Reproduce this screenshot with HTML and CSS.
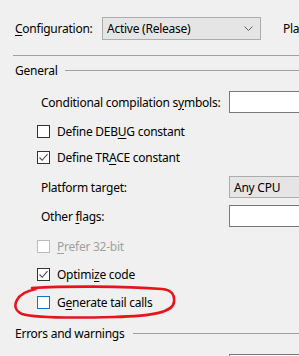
FILE: index.html
```html
<!DOCTYPE html>
<html lang="en">

<head>
    <meta charset="UTF-8">
    <title>Build properties</title>
    <link rel="stylesheet" href="styles.css">
</head>

<body>
    <div class="page">
        <div class="config-row">
            <span class="config-label"><u>C</u>onfiguration:</span>
            <div class="combo">
                <span>Active (Release)</span>
                <svg class="chevron" width="9" height="5" viewBox="0 0 9 5">
                    <path d="M0.5 0.5 L4.5 4.5 L8.5 0.5" fill="none" stroke="#606060" stroke-width="1" />
                </svg>
            </div>
            <span class="platform-label">Platform:</span>
        </div>
        <div class="rule"></div>

        <div class="section">
            <span>General</span>
            <div class="section-line"></div>
        </div>

        <div class="field field-symbols">
            <span class="field-label">Conditional compilation s<u>y</u>mbols:</span>
            <div class="textbox"></div>
        </div>

        <label class="check check-debug">
            <span class="box"></span>
            <span>Define DEB<u>U</u>G constant</span>
        </label>
        <label class="check check-trace">
            <span class="box checked">
                <svg width="11" height="11" viewBox="0 0 11 11">
                    <path d="M1.5 5.5 L4.2 8.3 L9.5 2.2" fill="none" stroke="#4a4a4a" stroke-width="1.1" />
                </svg>
            </span>
            <span>Define TR<u>A</u>CE constant</span>
        </label>

        <div class="field field-platform">
            <span class="field-label">Platform tar<u>g</u>et:</span>
            <div class="combo combo-wide">Any CPU</div>
        </div>
        <div class="field field-flags">
            <span class="field-label">Other <u>f</u>lags:</span>
            <div class="textbox"></div>
        </div>

        <label class="check check-prefer disabled">
            <span class="box"></span>
            <span><u>P</u>refer 32-bit</span>
        </label>
        <label class="check check-optimize">
            <span class="box checked">
                <svg width="11" height="11" viewBox="0 0 11 11">
                    <path d="M1.5 5.5 L4.2 8.3 L9.5 2.2" fill="none" stroke="#4a4a4a" stroke-width="1.1" />
                </svg>
            </span>
            <span>Optimi<u>z</u>e code</span>
        </label>
        <label class="check check-tail">
            <span class="box focus"></span>
            <span>G<u>e</u>nerate tail calls</span>
        </label>

        <div class="section section-errors">
            <span>Errors and warnings</span>
            <div class="section-line"></div>
        </div>
        <div class="field field-next">
            <div class="textbox"></div>
        </div>

        <!-- hand drawn annotation -->
        <svg class="marker" width="162" height="36" viewBox="0 0 162 36">
            <path d="M18 3 C50 1 110 1 148 4 C158 5 161 10 160 17 C159 27 140 31 100 32 C60 33 20 33 8 29 C1 26 0 20 3 15 C6 9 12 6 22 4"
                fill="none" stroke="#e8141c" stroke-width="2.6" stroke-linecap="round" />
        </svg>
    </div>
</body>

</html>
```

FILE: styles.css
```css
html,
body {
    margin: 0;
    padding: 0;
    background-color: #f0f0f0;
    overflow: hidden;
}

.page {
    position: relative;
    width: 299px;
    height: 356px;
    overflow: hidden;
    font-family: "Noto Sans", sans-serif;
    font-size: 12px;
    letter-spacing: -0.25px;
    color: #000;
}

u {
    text-decoration-thickness: 1px;
    text-underline-offset: 2px;
}

.config-row {
    display: flex;
    align-items: center;
    height: 23px;
    padding-top: 17px;
    padding-left: 15px;
    white-space: nowrap;
}

.config-label {
    flex: none;
    width: 87px;
}

.combo {
    box-sizing: border-box;
    flex: none;
    display: flex;
    align-items: center;
    justify-content: space-between;
    width: 159px;
    height: 23px;
    padding: 0 7px 0 4px;
    background: #e5e5e5;
    border: 1px solid #adadad;
}

.combo-wide {
    width: 80px;
    height: 22px;
}

.platform-label {
    flex: none;
    margin-left: 22px;
}

.rule {
    height: 1px;
    margin: 15px 0 0 13px;
    background: #a0a0a0;
}

.section {
    display: flex;
    align-items: center;
    height: 16px;
    margin-top: 6px;
    padding-left: 15px;
    white-space: nowrap;
}

.section-line {
    flex: 1;
    height: 1px;
    margin-left: 8px;
    background: #a0a0a0;
}

.field {
    display: flex;
    align-items: center;
    height: 22px;
    padding-left: 41px;
    white-space: nowrap;
}

.field-label {
    flex: none;
    width: 188px;
}

.textbox {
    box-sizing: border-box;
    flex: none;
    width: 80px;
    height: 22px;
    background: #fff;
    border: 1px solid #7a7a7a;
}

.field-symbols {
    margin-top: 13px;
}

.field-platform {
    margin-top: 9px;
}

.field-flags {
    margin-top: 7px;
}

.field-next {
    margin-top: 13px;
    padding-left: 229px;
}

.check {
    display: flex;
    align-items: center;
    height: 20px;
    padding-left: 37px;
    white-space: nowrap;
}

.box {
    box-sizing: border-box;
    flex: none;
    display: flex;
    align-items: center;
    justify-content: center;
    width: 13px;
    height: 13px;
    margin-right: 7px;
    background: #fff;
    border: 1px solid #333;
}

.box.focus {
    border-color: #0078d7;
}

.check.disabled {
    color: #a0a0a0;
}

.check.disabled .box {
    border-color: #bcbcbc;
}

.check-debug {
    margin-top: 8px;
}

.check-trace {
    margin-top: 6px;
}

.check-prefer {
    margin-top: 9px;
}

.check-optimize,
.check-tail {
    margin-top: 8px;
}

.section-errors {
    margin-top: 13px;
}

.marker {
    position: absolute;
    left: 14px;
    top: 285px;
}
```
